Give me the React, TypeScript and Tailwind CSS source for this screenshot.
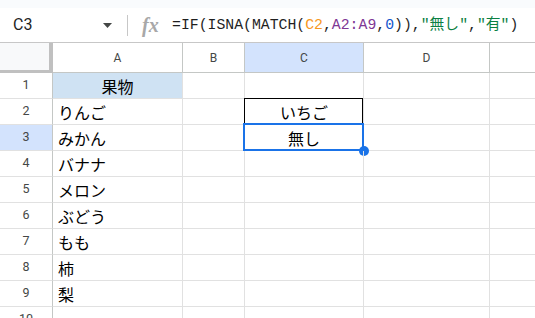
import React from "react";

const COLS = [
    { id: "A", w: "w-[130px]" },
    { id: "B", w: "w-[62px]" },
    { id: "C", w: "w-[119px]" },
    { id: "D", w: "w-[126px]" },
];

const ROWS: string[] = ["果物", "りんご", "みかん", "バナナ", "メロン", "ぶどう", "もも", "柿", "梨", ""];

const cellFont = { fontFamily: '"Noto Sans CJK JP", "Noto Sans", sans-serif' };

function FormulaBar() {
    return (
        <div className="flex h-[35px] items-center border-b border-[#c7c7c7] bg-white">
            <div className="w-[96px] pl-[13px] text-[16px] text-[#1f1f1f]" style={{ fontFamily: "Roboto, sans-serif" }}>
                C3
            </div>
            <svg width="9" height="5" viewBox="0 0 9 5" className="ml-[7px]">
                <path d="M0 0 L9 0 L4.5 5 Z" fill="#444746" />
            </svg>
            <div className="ml-[15px] h-[21px] w-px bg-[#c7c7c7]" />
            <div className="ml-[14px] w-[30px] text-[20px] font-bold italic text-[#a8a8a8]" style={{ fontFamily: '"Liberation Serif", serif' }}>
                fx
            </div>
            <div className="text-[14.8px] text-[#1f1f1f]" style={{ fontFamily: '"Liberation Mono", "Noto Sans CJK JP", monospace' }}>
                =IF(ISNA(MATCH(<span className="text-[#f7981d]">C2</span>,<span className="text-[#7e3794]">A2:A9</span>,
                <span className="text-[#1155cc]">0</span>)),<span className="text-[#0b8043]">"無し"</span>,
                <span className="text-[#0b8043]">"有"</span>)
            </div>
        </div>
    );
}

function HeaderRow() {
    return (
        <div className="flex h-[30px] border-b border-[#c4c7c5]">
            <div className="w-[53px] shrink-0 border-r-4 border-b-[3px] border-[#c0c0c0] bg-[#f8f9fa] -mb-px" />
            {COLS.map((c) => (
                <div
                    key={c.id}
                    className={`${c.w} shrink-0 border-r border-[#c4c7c5] flex items-center justify-center text-[12px] text-[#444746] ${c.id === "C" ? "bg-[#d3e3fd]" : "bg-white"}`}
                    style={{ fontFamily: "Roboto, sans-serif" }}
                >
                    {c.id}
                </div>
            ))}
            <div className="flex-1" />
        </div>
    );
}

function DataRow({ n, value }: { n: number; value: string }) {
    return (
        <div className="flex h-[26px] shrink-0">
            <div
                className={`w-[53px] shrink-0 border-r border-b border-r-[#c4c7c5] border-b-[#e1e1e1] flex items-center justify-center text-[12.5px] text-[#444746] ${n === 3 ? "bg-[#d3e3fd]" : "bg-white"}`}
                style={{ fontFamily: "Roboto, sans-serif" }}
            >
                {n}
            </div>
            <div
                className={`w-[130px] shrink-0 border-r border-b border-[#e1e1e1] flex items-center text-[16px] text-black ${n === 1 ? "bg-[#cfe2f3] justify-center" : "pl-[5px]"}`}
                style={cellFont}
            >
                {value}
            </div>
            <div className="w-[62px] shrink-0 border-r border-b border-[#e1e1e1]" />
            <div className="relative w-[119px] shrink-0 border-r border-b border-[#e1e1e1] flex items-center justify-center text-[16px] text-black" style={cellFont}>
                {n === 2 && "いちご"}
                {n === 3 && "無し"}
                {n === 2 && <div className="absolute -top-px -left-px right-0 bottom-0 border border-black" />}
                {n === 3 && (
                    <>
                        <div className="absolute -top-[2px] -left-[2px] -right-px -bottom-px border-2 border-[#1a73e8]" />
                        <div className="absolute -right-[6px] -bottom-[6px] h-[10px] w-[10px] rounded-full bg-[#1a73e8]" />
                    </>
                )}
            </div>
            <div className="w-[126px] shrink-0 border-r border-b border-[#e1e1e1]" />
            <div className="flex-1 border-b border-[#e1e1e1]" />
        </div>
    );
}

export default function App() {
    return (
        <div className="h-[318px] w-[535px] overflow-hidden bg-white">
            <div className="h-[8px] bg-[#f9fbfd]" />
            <FormulaBar />
            <HeaderRow />
            {ROWS.map((v, i) => (
                <DataRow key={i} n={i + 1} value={v} />
            ))}
        </div>
    );
}
